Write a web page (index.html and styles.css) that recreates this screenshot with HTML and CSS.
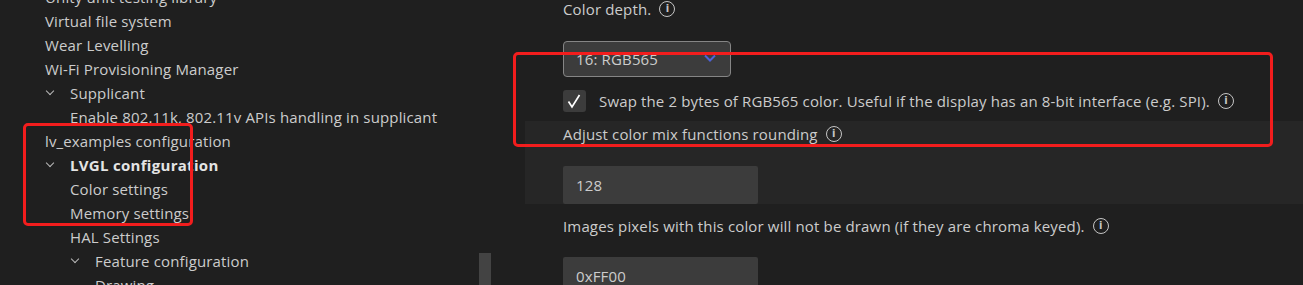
FILE: index.html
```html
<!DOCTYPE html>
<html lang="en">
<head>
    <meta charset="UTF-8">
    <title>LVGL configuration</title>
    <link rel="stylesheet" href="styles.css">
</head>
<body>
    <div class="page">
        <div class="sidebar">
            <ul class="tree">
                <li class="row lvl0">Unity unit testing library</li>
                <li class="row lvl0">Virtual file system</li>
                <li class="row lvl0">Wear Levelling</li>
                <li class="row lvl0">Wi-Fi Provisioning Manager</li>
                <li class="row lvl0"><span class="twisty"></span>Supplicant</li>
                <li class="row lvl1">Enable 802.11k, 802.11v APIs handling in supplicant</li>
                <li class="row lvl0">lv_examples configuration</li>
                <li class="row lvl0 bold"><span class="twisty"></span>LVGL configuration</li>
                <li class="row lvl1">Color settings</li>
                <li class="row lvl1">Memory settings</li>
                <li class="row lvl1">HAL Settings</li>
                <li class="row lvl1"><span class="twisty"></span>Feature configuration</li>
                <li class="row lvl2">Drawing</li>
            </ul>
            <div class="scrollbar"></div>
            <div class="mark mark-left"></div>
        </div>

        <div class="settings">
            <div class="setting first">
                <div class="label">Color depth. <span class="info">i</span></div>
                <div class="select">
                    <span>16: RGB565</span>
                    <svg class="chev" width="12" height="8" viewBox="0 0 12 8"><path d="M1 1.5 L6 6.5 L11 1.5" fill="none" stroke="#4e62d8" stroke-width="2"/></svg>
                </div>
                <div class="check-row">
                    <span class="checkbox">
                        <svg width="22" height="22" viewBox="0 0 22 22"><path d="M5.5 11.5 L9 17 L16.5 5" fill="none" stroke="#ffffff" stroke-width="1.7"/></svg>
                    </span>
                    <span>Swap the 2 bytes of RGB565 color. Useful if the display has an 8-bit interface (e.g. SPI).</span>
                    <span class="info">i</span>
                </div>
            </div>

            <div class="setting hover">
                <div class="label">Adjust color mix functions rounding <span class="info">i</span></div>
                <div class="input">128</div>
            </div>

            <div class="setting last">
                <div class="label">Images pixels with this color will not be drawn (if they are chroma keyed). <span class="info">i</span></div>
                <div class="input">0xFF00</div>
            </div>

            <div class="mark mark-right"></div>
        </div>
    </div>
</body>
</html>
```

FILE: styles.css
```css
* {
    margin: 0;
    padding: 0;
    box-sizing: border-box;
}
body {
    background-color: #1f1f1f;
    color: #cccccc;
    font-family: "Open Sans", "Noto Sans", sans-serif;
    font-size: 15px;
    letter-spacing: 0.15px;
    overflow: hidden;
}
.page {
    display: flex;
    height: 285px;
    position: relative;
}

/* tree on the left */
.sidebar {
    width: 491px;
    flex-shrink: 0;
    position: relative;
}
.tree {
    list-style: none;
    margin-top: -15px;
}
.row {
    height: 24px;
    line-height: 24px;
    white-space: nowrap;
    display: flex;
    align-items: center;
}
.lvl0 {
    padding-left: 45px;
}
.lvl1 {
    padding-left: 70px;
}
.lvl2 {
    padding-left: 95px;
}
.row.bold {
    font-weight: 700;
    color: #e4e4e4;
    letter-spacing: 0.3px;
}
.twisty {
    width: 25px;
    height: 24px;
    position: relative;
    flex-shrink: 0;
}
.twisty::before {
    content: "";
    position: absolute;
    left: 2px;
    top: 7px;
    width: 5px;
    height: 5px;
    border-right: 1px solid #b8b8b8;
    border-bottom: 1px solid #b8b8b8;
    transform: rotate(45deg);
}
.scrollbar {
    position: absolute;
    left: 479px;
    top: 253px;
    width: 12px;
    height: 40px;
    background-color: #434343;
}

/* settings on the right */
.settings {
    flex: 1;
    padding-left: 34px;
    position: relative;
}
.setting {
    padding-left: 38px;
}
.label {
    height: 24px;
    line-height: 24px;
    display: flex;
    align-items: center;
    white-space: nowrap;
}
.info {
    display: inline-flex;
    justify-content: center;
    align-items: center;
    width: 16px;
    height: 16px;
    margin-left: 8px;
    border: 1px solid #c5c5c5;
    border-radius: 50%;
    font-family: "DejaVu Sans", sans-serif;
    font-size: 10px;
    font-weight: 700;
    line-height: 1;
    letter-spacing: 0;
    color: #c5c5c5;
}
.first .label {
    margin-top: -3px;
}
.select {
    margin-top: 20px;
    width: 168px;
    height: 36px;
    background-color: #3c3c3c;
    border: 1px solid #858585;
    border-radius: 4px;
    display: flex;
    align-items: center;
    justify-content: space-between;
    padding: 0 14px 0 12px;
}
.chev {
    margin-top: -2px;
}
.check-row {
    margin-top: 13px;
    height: 22px;
    display: flex;
    align-items: center;
    white-space: nowrap;
}
.checkbox {
    width: 23px;
    height: 22px;
    border-radius: 3px;
    background-color: #3c3c3c;
    margin-right: 13px;
    display: flex;
    flex-shrink: 0;
}
.check-row .info {
    margin-left: 8px;
}
.first {
    height: 124px;
}
.hover {
    background-color: #262626;
    height: 83px;
    padding-top: 1px;
}
.input {
    width: 195px;
    height: 38px;
    line-height: 38px;
    background-color: #3c3c3c;
    border-radius: 2px;
    padding-left: 13px;
}
.hover .input {
    margin-top: 20px;
}
.last .label {
    margin-top: 10px;
}
.last .input {
    margin-top: 19px;
}

/* red annotation boxes */
.mark {
    position: absolute;
    border: 3px solid #f21d1d;
    border-radius: 5px;
}
.mark-left {
    left: 23px;
    top: 123px;
    width: 170px;
    height: 103px;
}
.mark-right {
    left: 22px;
    top: 52px;
    width: 760px;
    height: 95px;
}
```
